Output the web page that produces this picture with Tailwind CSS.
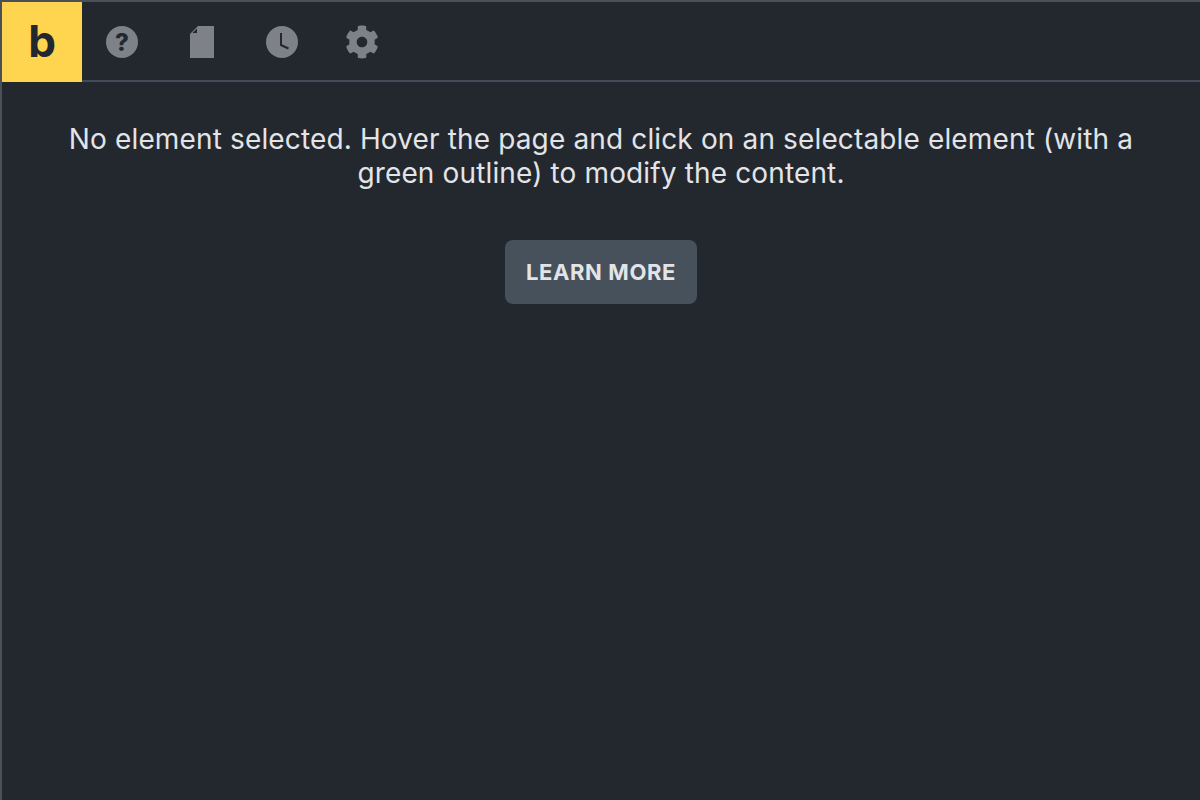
<!doctype html>
<html>
<head>
  <meta charset="UTF-8">
  <script src="https://cdn.jsdelivr.net/npm/@tailwindcss/browser@4"></script>
</head>
<body class="bg-[#23272e] font-['Inter',sans-serif]">
  <div class="h-screen overflow-hidden border-t-2 border-l-2 border-[#4a5058] flex flex-col">
    <!-- top bar -->
    <div class="flex items-start h-[80px] shrink-0 border-b-2 border-[#434c56]">
      <div class="w-[80px] h-[80px] bg-[#ffd54f] flex items-center justify-center text-[#23272e] text-[44px] font-bold leading-none pb-[3px]">b</div>
      <div class="w-[80px] h-[80px] flex items-center justify-center">
        <svg width="32" height="32" viewBox="0 0 32 32">
          <circle cx="16" cy="16" r="16" fill="#7e8288"/>
          <text x="16" y="24.500" text-anchor="middle" font-family="Inter" font-weight="800" font-size="24" fill="#23272e">?</text>
        </svg>
      </div>
      <div class="w-[80px] h-[80px] flex items-center justify-center">
        <svg width="24" height="32" viewBox="0 0 24 32">
          <path d="M8 0H24V32H0V8Z" fill="#7e8288"/>
          <path d="M7 2.500V7H2.500Z" fill="#23272e"/>
        </svg>
      </div>
      <div class="w-[80px] h-[80px] flex items-center justify-center">
        <svg width="32" height="32" viewBox="0 0 32 32">
          <circle cx="16" cy="16" r="16" fill="#7e8288"/>
          <path d="M15 7V19L22.500 22.500" fill="none" stroke="#23272e" stroke-width="2"/>
        </svg>
      </div>
      <div class="w-[80px] h-[80px] flex items-center justify-center">
        <svg width="34" height="34" viewBox="0 0 512 512">
          <path fill="#7e8288" d="M487.400 315.700l-42.600-24.600c4.300-23.200 4.300-47 0-70.200l42.600-24.600c4.900-2.800 7.100-8.600 5.500-14-11.100-35.600-30-67.800-54.700-94.600-3.800-4.100-10-5.100-14.800-2.300L380.800 110c-17.900-15.400-38.500-27.300-60.800-35.100V25.800c0-5.600-3.900-10.500-9.400-11.700-36.700-8.200-74.300-7.800-109.200 0-5.500 1.200-9.400 6.100-9.400 11.700V75c-22.200 7.900-42.800 19.800-60.800 35.100L88.700 85.500c-4.900-2.800-11-1.900-14.800 2.300-24.700 26.700-43.600 58.900-54.700 94.600-1.700 5.400.6 11.200 5.500 14L67.300 221c-4.300 23.200-4.300 47 0 70.200l-42.600 24.600c-4.900 2.800-7.100 8.600-5.500 14 11.100 35.600 30 67.800 54.700 94.600 3.800 4.100 10 5.100 14.800 2.300l42.600-24.600c17.900 15.400 38.500 27.300 60.800 35.100v49.200c0 5.600 3.900 10.500 9.400 11.700 36.700 8.200 74.300 7.800 109.200 0 5.500-1.200 9.400-6.100 9.400-11.700v-49.200c22.200-7.900 42.800-19.800 60.800-35.100l42.600 24.600c4.900 2.800 11 1.900 14.800-2.300 24.700-26.700 43.600-58.900 54.700-94.600 1.500-5.500-.7-11.300-5.600-14.100zM256 336c-44.100 0-80-35.900-80-80s35.900-80 80-80 80 35.900 80 80-35.900 80-80 80z"/>
        </svg>
      </div>
    </div>
    <div class="flex-1 flex flex-col items-center">
      <p class="mt-[40px] px-[30px] text-center text-[28px] tracking-[0.14px] leading-[34px] text-[#e2e4e8]">No element selected. Hover the page and click on an selectable element (with a green outline) to modify the content.</p>
      <button class="mt-[50px] pt-[1px] w-[192px] h-[64px] rounded-lg bg-[#47515b] text-[#e2e4e8] text-[22px] font-bold tracking-[0.6px]">LEARN MORE</button>
    </div>
  </div>
</body>
</html>
